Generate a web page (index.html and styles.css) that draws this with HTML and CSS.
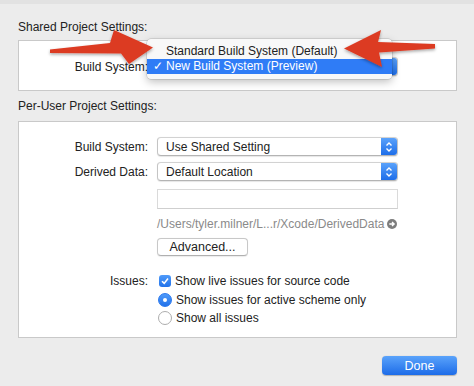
FILE: index.html
```html
<!DOCTYPE html>
<html>
  <head>
    <meta name="viewport" content="width=device-width,initial-scale=1.0">
    <title>Project Settings</title>
    <link rel="stylesheet" href="styles.css">
  </head>
  <body>
    <div class="window">
      <div class="titlebar"></div>
      <div class="content">
        <div class="section-title">Shared Project Settings:</div>
        <div class="box box-shared">
          <div class="form-grid">
            <div class="lbl">Build System:</div>
            <div class="popup">
              <span class="popup-text">New Build System (Preview)</span>
              <span class="stepper">
                <svg width="8" height="12" viewBox="0 0 8 12"><path d="M1.5 4.5 L4 2 L6.5 4.5 M1.5 7.5 L4 10 L6.5 7.5" fill="none" stroke="#fff" stroke-width="1.4"/></svg>
              </span>
            </div>
          </div>
        </div>

        <div class="section-title">Per-User Project Settings:</div>
        <div class="box box-user">
          <div class="form-grid">
            <div class="lbl">Build System:</div>
            <div class="popup">
              <span class="popup-text">Use Shared Setting</span>
              <span class="stepper">
                <svg width="8" height="12" viewBox="0 0 8 12"><path d="M1.5 4.5 L4 2 L6.5 4.5 M1.5 7.5 L4 10 L6.5 7.5" fill="none" stroke="#fff" stroke-width="1.4"/></svg>
              </span>
            </div>

            <div class="lbl row-2">Derived Data:</div>
            <div class="popup row-2">
              <span class="popup-text">Default Location</span>
              <span class="stepper">
                <svg width="8" height="12" viewBox="0 0 8 12"><path d="M1.5 4.5 L4 2 L6.5 4.5 M1.5 7.5 L4 10 L6.5 7.5" fill="none" stroke="#fff" stroke-width="1.4"/></svg>
              </span>
            </div>

            <div class="ctl textfield"></div>

            <div class="ctl path">
              <span>/Users/tyler.milner/L...r/Xcode/DerivedData</span>
              <svg class="reveal" width="10" height="10" viewBox="0 0 10 10"><circle cx="5" cy="5" r="5" fill="#7d7d7d"/><path d="M2.3 5 H7 M5 3 L7.2 5 L5 7" fill="none" stroke="#fff" stroke-width="1.3"/></svg>
            </div>

            <div class="ctl"><button class="btn-plain">Advanced...</button></div>

            <div class="lbl row-issues">Issues:</div>
            <div class="option row-issues">
              <span class="checkbox">
                <svg width="10" height="10" viewBox="0 0 10 10"><path d="M2 5.2 L4.2 7.4 L8 2.6" fill="none" stroke="#fff" stroke-width="1.6"/></svg>
              </span>
              Show live issues for source code
            </div>
            <div class="option ctl row-radio1">
              <span class="radio on"></span>
              Show issues for active scheme only
            </div>
            <div class="option ctl row-radio2">
              <span class="radio"></span>
              Show all issues
            </div>
          </div>
        </div>

        <div class="footer">
          <button class="btn-done">Done</button>
        </div>
      </div>

      <div class="menu">
        <div class="menu-item">Standard Build System (Default)</div>
        <div class="menu-item selected"><span class="check">✓</span>New Build System (Preview)</div>
      </div>

      <svg class="arrows" width="474" height="386" viewBox="0 0 474 386">
        <defs>
          <filter id="shadow" x="-10%" y="-20%" width="130%" height="160%">
            <feDropShadow dx="0" dy="1.5" stdDeviation="1.5" flood-color="#000" flood-opacity="0.35"/>
          </filter>
        </defs>
        <polygon filter="url(#shadow)" fill="#dc3a22" points="50,49.5 110,43 114,30 153,47.5 129,64 121,53.5 50,53"/>
        <polygon filter="url(#shadow)" fill="#dc3a22" points="435,44 378,42 381,30 344,48.5 382,67 379,52.5 435,48.5"/>
      </svg>
    </div>
  </body>
</html>
```

FILE: styles.css
```css
body {
  margin: 0;
  background: #ececec;
  font-family: "Liberation Sans", Arial, sans-serif;
  font-size: 12px;
  color: #222;
}
.window {
  position: relative;
  width: 474px;
  height: 386px;
  overflow: hidden;
}
.titlebar {
  height: 4px;
  background: #e2e2e2;
}
.content {
  padding: 15px 17px 0 18px;
}
.section-title {
  line-height: 16px;
  height: 16px;
}
.box {
  background: #fff;
  border: 1px solid #c9c9c9;
  margin-top: 5px;
}
.box-shared {
  padding: 16px 0 14px;
  margin-bottom: 7px;
}
.box-user {
  margin-top: 7px;
  padding: 15px 0 11px;
}
.form-grid {
  display: grid;
  grid-template-columns: 129px 241px;
  column-gap: 9px;
  align-items: center;
}
.lbl {
  grid-column: 1;
  text-align: right;
}
.ctl {
  grid-column: 2;
}
.popup {
  grid-column: 2;
  height: 17px;
  display: flex;
  align-items: center;
  justify-content: space-between;
  border: 1px solid #c4c4c4;
  border-top-color: #d2d2d2;
  border-bottom-color: #b4b4b4;
  border-radius: 4px;
  box-shadow: 0 0.5px 1px rgba(0, 0, 0, 0.1);
  background: #fff;
  overflow: hidden;
}
.popup-text {
  padding-left: 8px;
}
.stepper {
  width: 16px;
  height: 100%;
  background: linear-gradient(#5aa2fb, #1e6ee9);
  display: flex;
  align-items: center;
  justify-content: center;
}
.popup.row-2,
.lbl.row-2 {
  margin-top: 6px;
}
.textfield {
  height: 18px;
  margin-top: 8px;
  border: 1px solid #dadada;
  border-bottom-color: #cfcfcf;
}
.path {
  margin-top: 8px;
  line-height: 14px;
  color: #8a8a8a;
  display: flex;
  align-items: center;
  justify-content: space-between;
  padding-right: 1px;
}
.reveal {
  flex-shrink: 0;
}
.btn-plain {
  margin-top: 7px;
  width: 91px;
  height: 18px;
  padding: 0;
  font-family: inherit;
  font-size: 12.5px;
  color: #222;
  background: #fff;
  border: 1px solid #c8c8c8;
  border-bottom-color: #b0b0b0;
  border-radius: 4px;
  box-shadow: 0 0.5px 1px rgba(0, 0, 0, 0.08);
}
.row-issues {
  margin-top: 17px;
}
.option {
  grid-column: 2;
  display: flex;
  align-items: center;
  height: 16px;
  gap: 4px;
}
.row-radio1 {
  margin-top: 3px;
}
.row-radio2 {
  margin-top: 2px;
}
.checkbox {
  width: 12px;
  height: 12px;
  margin-left: 2px;
  border-radius: 3px;
  background: linear-gradient(#4f9bfa, #2272ea);
  display: flex;
  align-items: center;
  justify-content: center;
}
.radio {
  width: 12px;
  height: 12px;
  margin-left: 1px;
  border-radius: 50%;
  border: 1px solid #adadad;
  background: #fff;
  position: relative;
}
.radio.on {
  border-color: #2a78ee;
  background: linear-gradient(#4f9bfa, #2272ea);
}
.radio.on::after {
  content: "";
  position: absolute;
  left: 4px;
  top: 4px;
  width: 4px;
  height: 4px;
  border-radius: 50%;
  background: #fff;
}
.footer {
  display: flex;
  justify-content: flex-end;
  margin-top: 18px;
}
.btn-done {
  width: 75px;
  height: 19px;
  padding: 0;
  border: none;
  border-radius: 4px;
  font-family: inherit;
  font-size: 12.5px;
  color: #fff;
  background: linear-gradient(#5aa3fb, #1d6ce8);
  box-shadow: 0 0.5px 1px rgba(0, 0, 0, 0.25);
}
.menu {
  position: absolute;
  left: 147px;
  top: 39px;
  width: 245px;
  padding: 4px 0 5px;
  background: #f8f8f8;
  border-radius: 4px;
  box-shadow: 0 0 0 0.5px rgba(0, 0, 0, 0.18), 0 3px 8px rgba(0, 0, 0, 0.25);
}
.menu-item {
  height: 16px;
  line-height: 16px;
  padding-left: 19px;
  color: #222;
  position: relative;
}
.menu-item.selected {
  height: 15px;
  line-height: 15px;
  background: #2f7cf6;
  color: #fff;
}
.check {
  position: absolute;
  left: 6px;
}
.arrows {
  position: absolute;
  left: 0;
  top: 0;
}
```
